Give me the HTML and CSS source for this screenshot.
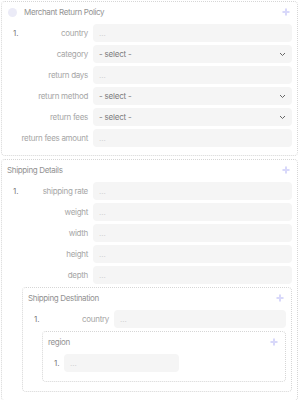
FILE: index.html
```html
<!DOCTYPE html>
<html lang="en">
<head>
    <meta charset="UTF-8">
    <meta name="viewport" content="width=device-width, initial-scale=1.0">
    <title>Schema Form</title>
    <link rel="stylesheet" href="styles.css">
</head>
<body>
    <div class="page">
        <div class="box">
            <div class="box-head">
                <span class="dot"></span>
                <span class="box-title">Merchant Return Policy</span>
                <svg class="plus" width="8" height="8" viewBox="0 0 8 8"><path d="M4 0.5v7M0.5 4h7" /></svg>
            </div>
            <div class="item">
                <span class="num">1.</span>
                <div class="fields">
                    <label>country</label>
                    <input type="text" placeholder="...">
                    <label>category</label>
                    <div class="select">
                        <select><option>- select -</option></select>
                        <svg class="chev" width="7" height="5" viewBox="0 0 7 5"><path d="M1 1l2.5 2.5L6 1" /></svg>
                    </div>
                    <label>return days</label>
                    <input type="text" placeholder="...">
                    <label>return method</label>
                    <div class="select">
                        <select><option>- select -</option></select>
                        <svg class="chev" width="7" height="5" viewBox="0 0 7 5"><path d="M1 1l2.5 2.5L6 1" /></svg>
                    </div>
                    <label>return fees</label>
                    <div class="select">
                        <select><option>- select -</option></select>
                        <svg class="chev" width="7" height="5" viewBox="0 0 7 5"><path d="M1 1l2.5 2.5L6 1" /></svg>
                    </div>
                    <label>return fees amount</label>
                    <input type="text" placeholder="...">
                </div>
            </div>
        </div>

        <div class="box">
            <div class="box-head">
                <span class="box-title">Shipping Details</span>
                <svg class="plus" width="8" height="8" viewBox="0 0 8 8"><path d="M4 0.5v7M0.5 4h7" /></svg>
            </div>
            <div class="item">
                <span class="num">1.</span>
                <div class="fields">
                    <label>shipping rate</label>
                    <input type="text" placeholder="...">
                    <label>weight</label>
                    <input type="text" placeholder="...">
                    <label>width</label>
                    <input type="text" placeholder="...">
                    <label>height</label>
                    <input type="text" placeholder="...">
                    <label>depth</label>
                    <input type="text" placeholder="...">

                    <div class="box nested">
                        <div class="box-head">
                            <span class="box-title">Shipping Destination</span>
                            <svg class="plus" width="8" height="8" viewBox="0 0 8 8"><path d="M4 0.5v7M0.5 4h7" /></svg>
                        </div>
                        <div class="item">
                            <span class="num">1.</span>
                            <div class="fields">
                                <label>country</label>
                                <input type="text" placeholder="...">

                                <div class="box nested region">
                                    <div class="box-head">
                                        <span class="box-title">region</span>
                                        <svg class="plus" width="8" height="8" viewBox="0 0 8 8"><path d="M4 0.5v7M0.5 4h7" /></svg>
                                    </div>
                                    <div class="item">
                                        <span class="num">1.</span>
                                        <input class="short" type="text" placeholder="...">
                                    </div>
                                </div>
                            </div>
                        </div>
                    </div>
                </div>
            </div>
        </div>
    </div>
</body>
</html>
```

FILE: styles.css
```css
* {
    box-sizing: border-box;
}
body {
    margin: 0;
    font-family: Inter, "Noto Sans", sans-serif;
    background-color: #fff;
}
.page {
    padding: 1px;
}
.box {
    border: 1px dotted #d6d6d6;
    border-radius: 4px;
    padding: 0 5px 8px 0;
}
.box + .box {
    margin-top: 3px;
}
.box-head {
    height: 20px;
    margin-bottom: 2px;
    padding-left: 5px;
    margin-right: 2px;
    display: flex;
    align-items: center;
}
.box-title {
    flex: 1;
    font-size: 8px;
    letter-spacing: -0.35px;
    color: #929292;
}
.dot {
    width: 9px;
    height: 9px;
    margin-left: 1px;
    margin-right: 7px;
    border-radius: 50%;
    background-color: #ebebf7;
}
.plus {
    stroke: #d8d8fa;
    stroke-width: 2;
    fill: none;
}
.item {
    display: flex;
    padding-left: 11px;
}
.num {
    width: 7px;
    flex-shrink: 0;
    font-size: 8px;
    line-height: 18px;
    color: #7a7a7a;
}
.fields {
    flex: 1;
    display: grid;
    grid-template-columns: 68px 1fr;
    column-gap: 5px;
    row-gap: 3px;
}
label {
    text-align: right;
    font-size: 8px;
    letter-spacing: -0.3px;
    line-height: 18px;
    color: #a6a6a6;
    white-space: nowrap;
}
input, select {
    display: block;
    height: 18px;
    width: 100%;
    border: none;
    border-radius: 4px;
    background-color: #f5f5f5;
    font-family: inherit;
    font-size: 8px;
    padding: 0 6px;
    color: #7c7c7c;
    outline: none;
}
input::placeholder {
    color: #d0d0d0;
}
select {
    appearance: none;
    -webkit-appearance: none;
    letter-spacing: -0.2px;
}
.select {
    position: relative;
    height: 18px;
}
.chev {
    position: absolute;
    right: 6px;
    top: 7px;
    stroke: #666;
    stroke-width: 1;
    fill: none;
}
.nested {
    grid-column: 1 / -1;
    margin-left: 2px;
    padding-bottom: 9px;
}
.nested .nested {
    margin-left: 1px;
}
.region .num {
    margin-right: 3px;
}
.short {
    width: 115px;
}
```
